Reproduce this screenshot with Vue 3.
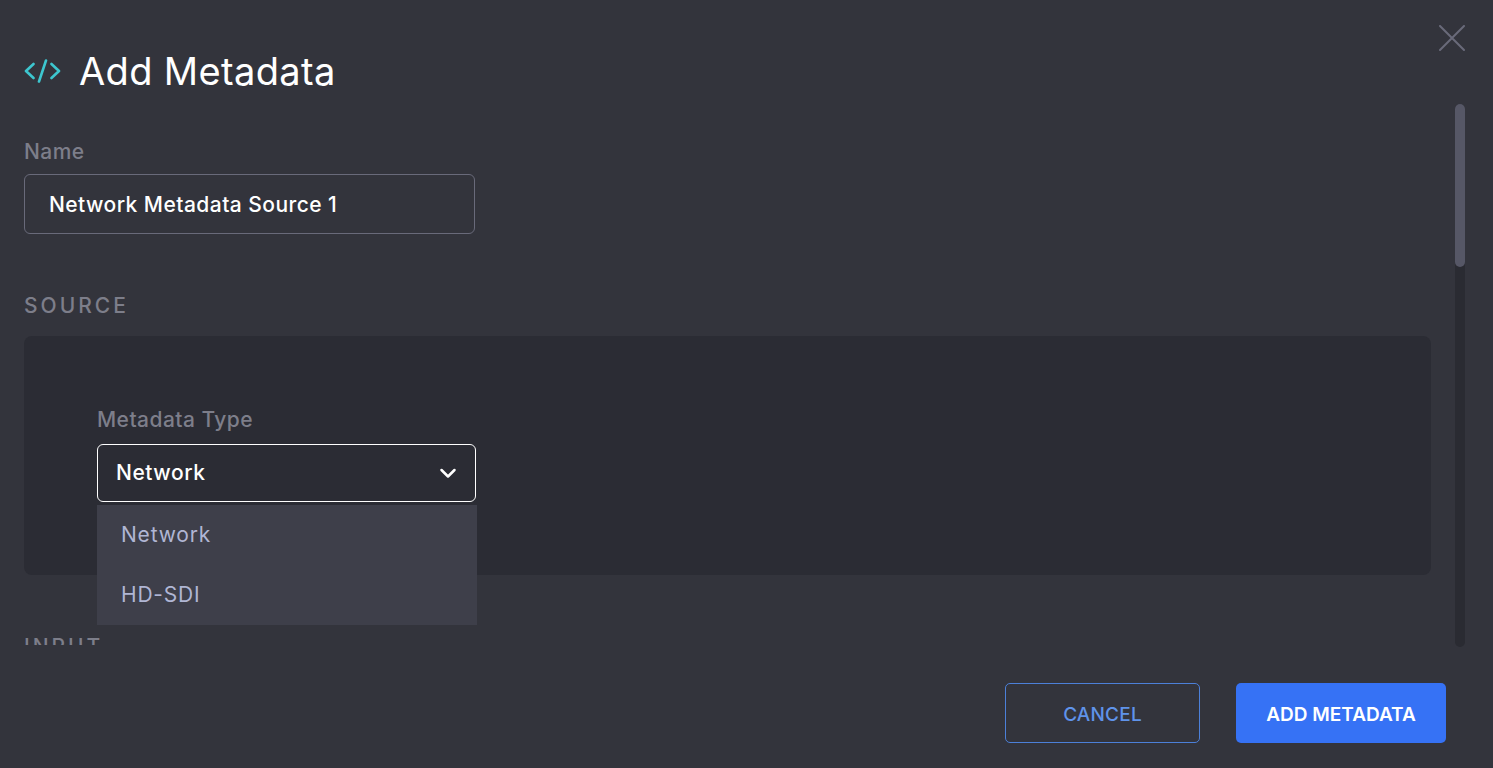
<template>
  <div class="modal">
    <button class="close" aria-label="Close">
      <svg width="26" height="26" viewBox="0 0 26 26" fill="none" stroke="#696a7a" stroke-width="2" stroke-linecap="round">
        <path d="M1 1 25 25M25 1 1 25" />
      </svg>
    </button>

    <header class="head">
      <svg class="head-icon" width="38" height="24" viewBox="0 0 38 24" fill="none" stroke="#3dc6cf" stroke-width="2.6" stroke-linecap="round" stroke-linejoin="round">
        <path d="M9.500 5 2 12l7.500 7M27.500 5 35 12l-7.500 7M22 1.500 15 22.500" />
      </svg>
      <h1 class="title">Add Metadata</h1>
    </header>

    <div class="middle">
      <div class="scroll">
        <label class="label">Name</label>
        <input class="input" :value="name" />

        <h2 class="section-title">SOURCE</h2>
        <section class="panel">
          <label class="label">Metadata Type</label>
          <div class="select-wrap">
            <div class="select">
              <span>{{ selected }}</span>
              <svg width="18" height="12" viewBox="0 0 18 12" fill="none" stroke="#fff" stroke-width="2.500" stroke-linecap="round" stroke-linejoin="round">
                <path d="M2.500 3 9 9.500 15.500 3" />
              </svg>
            </div>
            <ul class="menu">
              <li v-for="opt in options" :key="opt" class="menu-item">{{ opt }}</li>
            </ul>
          </div>
        </section>

        <h2 class="section-title next">INPUT</h2>
      </div>
      <div class="track"><div class="thumb"></div></div>
    </div>

    <footer class="foot">
      <button class="btn btn-outline">CANCEL</button>
      <button class="btn btn-primary">ADD METADATA</button>
    </footer>
  </div>
</template>

<script setup>
const name = "Network Metadata Source 1";
const selected = "Network";
const options = ["Network", "HD-SDI"];
</script>

<style>
html,
body {
  margin: 0;
  background: #33343c;
}
</style>

<style scoped>
.modal {
  position: relative;
  display: flex;
  flex-direction: column;
  height: 768px;
  box-sizing: border-box;
  padding: 0 28px 25px 24px;
  background: #33343c;
  font-family: Inter, "Noto Sans", sans-serif;
  overflow: hidden;
}

.close {
  position: absolute;
  top: 25px;
  right: 28px;
  width: 26px;
  height: 26px;
  padding: 0;
  border: 0;
  background: none;
}

.close svg {
  display: block;
}

.head {
  display: flex;
  align-items: center;
  gap: 17px;
  height: 104px;
  padding-top: 38px;
  box-sizing: border-box;
}

.title {
  margin: 0;
  font-size: 38px;
  font-weight: 400;
  color: #fff;
  letter-spacing: 0.35px;
}

.middle {
  display: flex;
  height: 543px;
}

.scroll {
  width: 1407px;
  height: 541px;
  overflow: hidden;
  flex: none;
}

.track {
  width: 10px;
  margin-left: 24px;
  background: #2a2b32;
  border-radius: 5px;
}

.thumb {
  height: 163px;
  background: #565766;
  border-radius: 5px;
}

.label {
  display: block;
  height: 24px;
  line-height: 24px;
  margin: 36px 0 10px;
  font-size: 21px;
  font-weight: 500;
  letter-spacing: 0.45px;
  color: #7d7e8a;
}

.input {
  display: block;
  width: 451px;
  height: 60px;
  box-sizing: border-box;
  padding: 0 24px;
  background: transparent;
  border: 1px solid #696a7a;
  border-radius: 6px;
  font: 500 21px Inter, "Noto Sans", sans-serif;
  letter-spacing: 0.45px;
  color: #fff;
  outline: none;
}

.section-title {
  margin: 60px 0 18px;
  height: 24px;
  line-height: 24px;
  font-size: 21px;
  font-weight: 500;
  letter-spacing: 3px;
  color: #7d7e8a;
}

.panel {
  height: 239px;
  padding: 72px 0 0 73px;
  box-sizing: border-box;
  background: #2b2c34;
  border-radius: 8px;
}

.panel .label {
  margin: 0 0 12px;
}

.select-wrap {
  position: relative;
  width: 380px;
}

.select {
  display: flex;
  align-items: center;
  justify-content: space-between;
  width: 379px;
  height: 58px;
  box-sizing: border-box;
  padding: 0 18px;
  border: 1px solid #fff;
  border-radius: 6px;
  font-size: 21px;
  line-height: 24px;
  font-weight: 500;
  letter-spacing: 0.55px;
  color: #fff;
}

.menu {
  position: absolute;
  top: 61px;
  left: 0;
  width: 380px;
  margin: 0;
  padding: 0;
  list-style: none;
  background: #3e3f4a;
  z-index: 2;
}

.menu-item {
  height: 60px;
  line-height: 60px;
  padding-left: 24px;
  font-size: 21px;
  font-weight: 400;
  letter-spacing: 0.8px;
  color: #b0b6d4;
}

.section-title.next {
  margin: 60px 0 0;
}

.foot {
  display: flex;
  justify-content: flex-end;
  gap: 36px;
  margin-top: 36px;
  padding-right: 19px;
}

.btn {
  height: 60px;
  box-sizing: border-box;
  padding-top: 4px;
  border-radius: 5px;
  font: 600 19px Inter, "Noto Sans", sans-serif;
}

.btn-outline {
  width: 195px;
  background: transparent;
  border: 1px solid #4c80d9;
  color: #5f93ea;
  font-weight: 500;
  letter-spacing: 0.2px;
}

.btn-primary {
  width: 210px;
  background: #3672f5;
  border: 0;
  color: #fff;
}
</style>
